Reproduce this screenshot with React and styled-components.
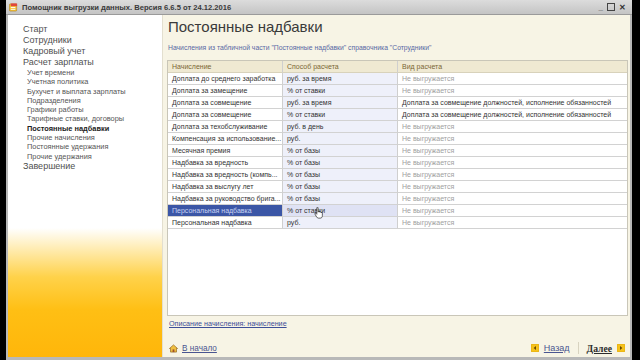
import styled, { createGlobalStyle } from 'styled-components';

const GlobalStyle = createGlobalStyle`
  html, body {
    margin: 0;
    padding: 0;
    background: #000;
  }
  body {
    font-family: 'Liberation Sans', Arial, sans-serif;
  }
`;

const navTop = ['Старт', 'Сотрудники', 'Кадровый учет', 'Расчет зарплаты'];
const navSub = [
  'Учет времени',
  'Учетная политика',
  'Бухучет и выплата зарплаты',
  'Подразделения',
  'Графики работы',
  'Тарифные ставки, договоры',
  'Постоянные надбавки',
  'Прочие начисления',
  'Постоянные удержания',
  'Прочие удержания',
];

const rows = [
  ['Доплата до среднего заработка', 'руб. за время', ''],
  ['Доплата за замещение', '% от ставки', ''],
  ['Доплата за совмещение', 'руб. за время', 'Доплата за совмещение должностей, исполнение обязанностей'],
  ['Доплата за совмещение', '% от ставки', 'Доплата за совмещение должностей, исполнение обязанностей'],
  ['Доплата за техобслуживание', 'руб. в день', ''],
  ['Компенсация за использование...', 'руб.', ''],
  ['Месячная премия', '% от базы', ''],
  ['Надбавка за вредность', '% от базы', ''],
  ['Надбавка за вредность (компь...', '% от базы', ''],
  ['Надбавка за выслугу лет', '% от базы', ''],
  ['Надбавка за руководство брига...', '% от базы', ''],
  ['Персональная надбавка', '% от ставки', ''],
  ['Персональная надбавка', 'руб.', ''],
];

export default function App() {
  return (
    <Screen>
      <GlobalStyle />
      <Window>
        <TitleBar>
          <AppIcon viewBox="0 0 10 10">
            <rect x="0.5" y="1" width="8" height="8" rx="1" fill="#f3c23a" stroke="#b07a10" strokeWidth="0.6" />
            <rect x="2" y="0.5" width="7" height="3" fill="#e0463a" />
            <rect x="2" y="4.5" width="5" height="1" fill="#fff" />
            <rect x="2" y="6.5" width="5" height="1" fill="#fff" />
          </AppIcon>
          <TitleText>Помощник выгрузки данных. Версия 6.6.5 от 24.12.2016</TitleText>
          <WinControls>
            <span>_</span>
            <Square />
            <span>✕</span>
          </WinControls>
        </TitleBar>
        <Body>
          <Sidebar>
            {navTop.map((t) => (
              <NavItem key={t}>{t}</NavItem>
            ))}
            {navSub.map((t) => (
              <NavSub key={t} $active={t === 'Постоянные надбавки'}>
                {t}
              </NavSub>
            ))}
            <NavItem>Завершение</NavItem>
          </Sidebar>
          <Main>
            <PageTitle>Постоянные надбавки</PageTitle>
            <Subtitle>Начисления из табличной части "Постоянные надбавки" справочника "Сотрудники"</Subtitle>
            <Grid>
              <Row>
                <Cell $header>Начисление</Cell>
                <Cell $header>Способ расчета</Cell>
                <Cell $header $last>Вид расчета</Cell>
              </Row>
              {rows.map((r, i) => {
                const sel = i === 11;
                return (
                  <Row key={i}>
                    <Cell $sel={sel}>{r[0]}</Cell>
                    <Cell $method $selMethod={sel}>{r[1]}</Cell>
                    <Cell $last $muted={!r[2]}>{r[2] || 'Не выгружается'}</Cell>
                  </Row>
                );
              })}
              <Cursor viewBox="0 0 10 14">
                <path d="M3 1 C3 0 4.5 0 4.5 1 L4.5 6 L5 5.5 C5.5 5 6.5 5.2 6.5 6 C7 5.5 8 5.7 8 6.5 C8.5 6.2 9.5 6.4 9.5 7.2 L9.5 10 C9.5 12 8.5 13 7 13 L5 13 C4 13 3.3 12.4 2.8 11.6 L0.8 8.2 C0.4 7.5 1.2 6.8 1.9 7.4 L3 8.5 Z" fill="#fff" stroke="#000" strokeWidth="0.7" />
              </Cursor>
            </Grid>
            <DescLink>Описание начисления: начисление</DescLink>
            <Footer>
              <HomeLink>
                <HomeIcon viewBox="0 0 10 10">
                  <path d="M5 1 L9.5 5 L8.3 5 L8.3 9 L1.7 9 L1.7 5 L0.5 5 Z" fill="#f0c040" stroke="#8a5a10" strokeWidth="0.7" />
                  <rect x="4" y="6" width="2" height="3" fill="#a0502a" />
                </HomeIcon>
                <FootLink>В начало</FootLink>
              </HomeLink>
              <NavButtons>
                <ArrowBox viewBox="0 0 8 8">
                  <rect x="0" y="0" width="8" height="8" rx="1" fill="#f5c21c" stroke="#d9a000" strokeWidth="0.6" />
                  <path d="M5 2 L2.6 4 L5 6 Z" fill="#6a4a00" />
                </ArrowBox>
                <FootLink $size="9px">Назад</FootLink>
                <Divider />
                <FootLink $bold>Далее</FootLink>
                <ArrowBox viewBox="0 0 8 8">
                  <rect x="0" y="0" width="8" height="8" rx="1" fill="#f5c21c" stroke="#d9a000" strokeWidth="0.6" />
                  <path d="M3 2 L5.4 4 L3 6 Z" fill="#6a4a00" />
                </ArrowBox>
              </NavButtons>
            </Footer>
          </Main>
        </Body>
      </Window>
    </Screen>
  );
}

const Screen = styled.div`
  width: 640px;
  height: 360px;
  background: #000;
  padding-left: 6px;
  box-sizing: border-box;
  overflow: hidden;
`;

const Window = styled.div`
  width: 626px;
  height: 360px;
  display: flex;
  flex-direction: column;
  background: #b8b8b8;
  box-sizing: border-box;
  padding: 0 2px 3px 2px;
`;

const TitleBar = styled.div`
  height: 14px;
  flex-shrink: 0;
  display: flex;
  align-items: center;
  background: linear-gradient(#dcdcdc, #c4c4c4);
  border-bottom: 1px solid #9a9a9a;
  margin: 0 -2px;
  padding: 0 6px 0 3px;
`;

const AppIcon = styled.svg`
  width: 9px;
  height: 9px;
  margin-right: 4px;
`;

const TitleText = styled.div`
  font-size: 7.6px;
  font-weight: bold;
  color: #3a3a3a;
  flex: 1;
  white-space: nowrap;
`;

const WinControls = styled.div`
  display: flex;
  align-items: center;
  gap: 4px;
  font-size: 8px;
  font-weight: bold;
  color: #333;
`;

const Square = styled.div`
  width: 6px;
  height: 6px;
  border: 1px solid #444;
`;

const Body = styled.div`
  flex: 1;
  display: flex;
  min-width: 0;
`;

const Sidebar = styled.div`
  width: 155px;
  flex-shrink: 0;
  box-sizing: border-box;
  padding: 9px 0 0 15px;
  background: linear-gradient(#ffffff 0, #ffffff 213px, #ffd24a 262px, #ffbf14 295px, #ffb60a 100%);
  border-right: 1px solid #e3dfcf;
`;

const NavItem = styled.div`
  font-size: 9px;
  line-height: 11px;
  color: #505050;
  white-space: nowrap;
`;

const NavSub = styled.div`
  font-size: 7.4px;
  line-height: 9.3px;
  padding-left: 4px;
  color: ${(p) => (p.$active ? '#222' : '#555')};
  font-weight: ${(p) => (p.$active ? 'bold' : 'normal')};
  white-space: nowrap;
`;

const Main = styled.div`
  flex: 1;
  min-width: 0;
  background: #f7f4e5;
  padding: 0 2px 0 4px;
  display: flex;
  flex-direction: column;
`;

const PageTitle = styled.h1`
  margin: 4px 0 0 1px;
  font-size: 15px;
  line-height: 16px;
  font-weight: normal;
  color: #3a3a3a;
`;

const Subtitle = styled.div`
  margin: 8px 0 0 1px;
  font-size: 6.8px;
  line-height: 9px;
  color: #5868a4;
  white-space: nowrap;
`;

const Grid = styled.div`
  margin-top: 8px;
  height: 256px;
  flex-shrink: 0;
  box-sizing: border-box;
  background: #fff;
  border: 1px solid #c9c6b8;
  position: relative;
`;

const Row = styled.div`
  display: grid;
  grid-template-columns: 115px 115px minmax(0, 1fr);
  height: 12px;
`;

const Cell = styled.div`
  font-size: 7px;
  line-height: 11px;
  padding-left: 4px;
  white-space: nowrap;
  overflow: hidden;
  box-sizing: border-box;
  border-right: ${(p) => (p.$last ? 'none' : '1px solid #cfcfcf')};
  border-bottom: 1px solid ${(p) => (p.$header ? '#d8d2bb' : '#d2d2d2')};
  color: ${(p) =>
    p.$header ? '#7a6634' : p.$sel ? '#c9d4f4' : p.$muted ? '#a0a0a0' : '#333'};
  background: ${(p) =>
    p.$header
      ? '#efe9d2'
      : p.$sel
      ? '#3b56a6'
      : p.$selMethod
      ? '#dfe2f4'
      : p.$method
      ? '#eef0fa'
      : 'transparent'};
`;

const Cursor = styled.svg`
  position: absolute;
  left: 146px;
  top: 146px;
  width: 9px;
  height: 12px;
`;

const DescLink = styled.div`
  margin: 3px 0 0 2px;
  font-size: 7.2px;
  line-height: 9px;
  color: #3d4f98;
  text-decoration: underline;
`;

const Footer = styled.div`
  margin-top: 14px;
  display: flex;
  align-items: center;
  justify-content: space-between;
  padding: 0 3px 0 2px;
`;

const HomeLink = styled.div`
  display: flex;
  align-items: center;
  gap: 4px;
`;

const HomeIcon = styled.svg`
  width: 9px;
  height: 9px;
`;

const FootLink = styled.span`
  font-size: ${(p) => (p.$bold ? '9.6px' : p.$size || '8.2px')};
  font-weight: ${(p) => (p.$bold ? 'bold' : 'normal')};
  color: ${(p) => (p.$bold ? '#2c2c2c' : '#4a5590')};
  text-decoration: underline;
  font-family: ${(p) => (p.$bold ? "'Liberation Serif', serif" : 'inherit')};
`;

const NavButtons = styled.div`
  display: flex;
  align-items: center;
  gap: 5px;
`;

const ArrowBox = styled.svg`
  width: 8px;
  height: 8px;
  flex-shrink: 0;
  display: block;
`;

const Divider = styled.div`
  width: 1px;
  height: 12px;
  background: #d8d3c0;
  margin: 0 3px;
`;
